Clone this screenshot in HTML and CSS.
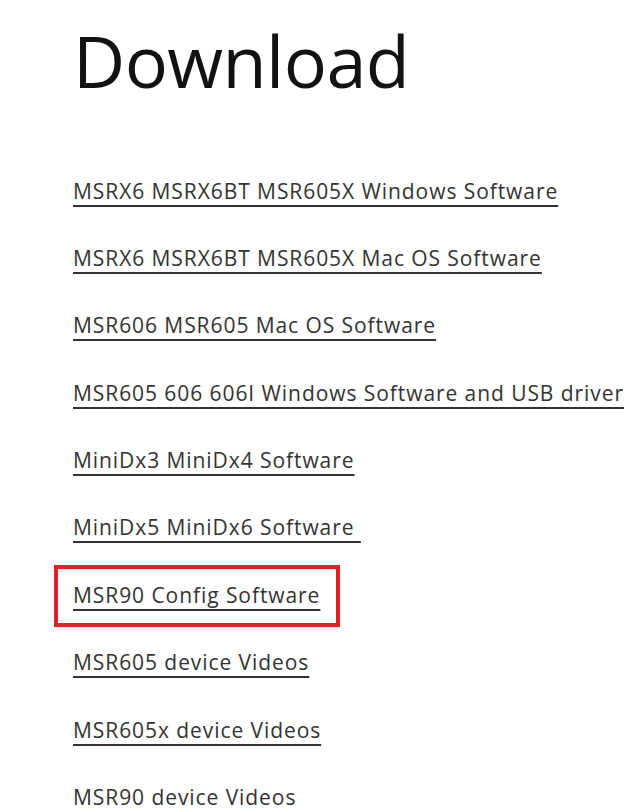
FILE: index.html
```html
<!DOCTYPE html>
<html>
<head>
<meta charset="utf-8">
<link rel="stylesheet" href="styles.css">
</head>
<body>
<main class="page">
  <h1 class="title">Download</h1>
  <ul class="links">
    <li><a class="dl" href="#">MSRX6 MSRX6BT MSR605X Windows Software</a></li>
    <li><a class="dl" href="#">MSRX6 MSRX6BT MSR605X Mac OS Software</a></li>
    <li><a class="dl" href="#">MSR606 MSR605 Mac OS Software</a></li>
    <li><a class="dl" href="#">MSR605 606 606I Windows Software and USB driver</a></li>
    <li><a class="dl" href="#">MiniDx3 MiniDx4 Software</a></li>
    <li><a class="dl" href="#">MiniDx5 MiniDx6 Software&nbsp;</a></li>
    <li class="marked"><a class="dl" href="#">MSR90 Config Software</a></li>
    <li><a class="dl" href="#">MSR605 device Videos</a></li>
    <li><a class="dl" href="#">MSR605x device Videos</a></li>
    <li><a class="dl" href="#">MSR90 device Videos</a></li>
  </ul>
</main>
</body>
</html>
```
FILE: styles.css
```css
html, body {
  margin: 0;
  padding: 0;
  background: #ffffff;
}
.page {
  padding: 0 0 0 73px;
  font-family: "Open Sans", "Noto Sans", sans-serif;
  color: #333333;
}
.title {
  margin: 10px 0 0 0;
  font-size: 72px;
  font-weight: 400;
  line-height: 100px;
  color: #121212;
  letter-spacing: -0.6px;
}
.links {
  list-style: none;
  margin: 65.5px 0 0 0;
  padding: 0;
  display: flex;
  flex-direction: column;
  gap: 37.4px;
}
.links li {
  font-size: 21px;
  line-height: 30px;
  white-space: nowrap;
}
.dl {
  letter-spacing: 0.93px;
  color: #333333;
  text-decoration: underline;
  text-decoration-thickness: 2px;
  text-underline-offset: 5.5px;
  text-decoration-color: #333333;
}
.marked {
  align-self: flex-start;
  margin: -15px 0 -17px -19px;
  padding: 11px 16px 13px 15px;
  border: 4px solid #e41e25;
}
```
